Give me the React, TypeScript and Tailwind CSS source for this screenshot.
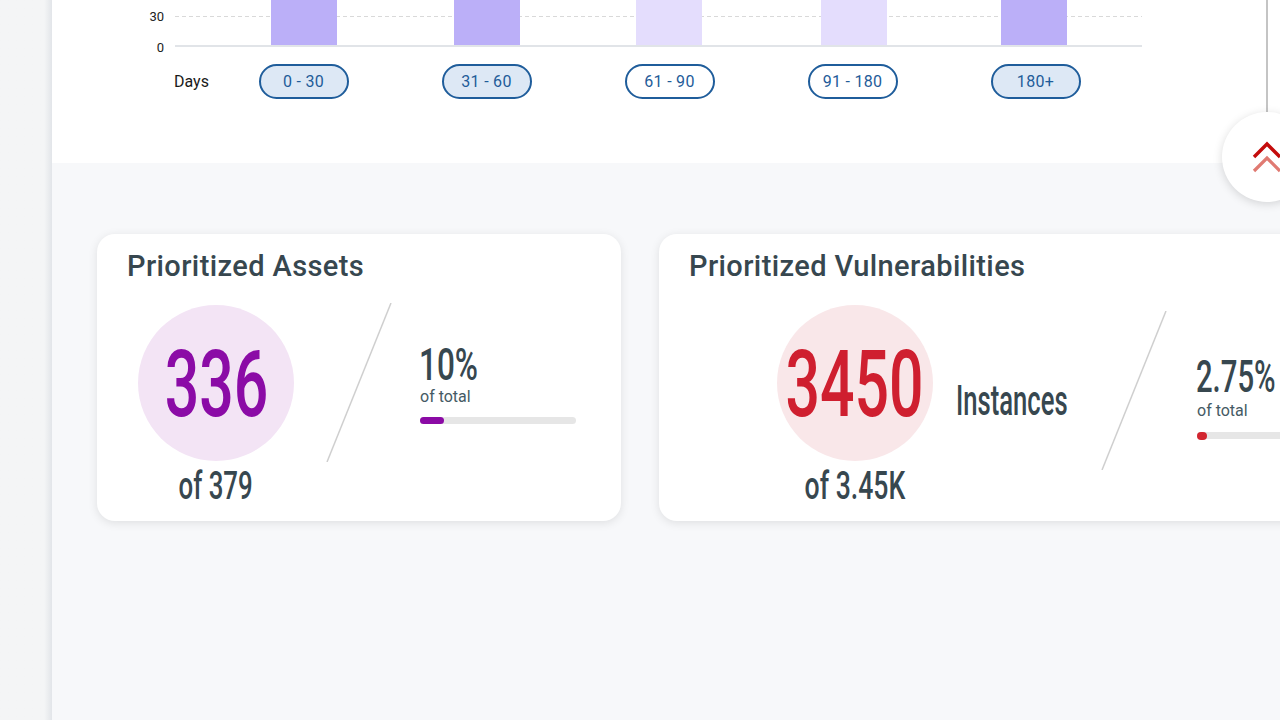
import React from "react";

const pills = [
  { label: "0 - 30", filled: true },
  { label: "31 - 60", filled: true },
  { label: "61 - 90", filled: false },
  { label: "91 - 180", filled: false },
  { label: "180+", filled: true },
];

const bars = [
  { x: 96, c: "#bbaff8" },
  { x: 279, c: "#bbaff8" },
  { x: 461, c: "#e4ddfd" },
  { x: 646, c: "#e4ddfd" },
  { x: 826, c: "#bbaff8" },
];

function Diagonal({ h }: { h: number }) {
  return (
    <svg width="66" height={h} className="shrink-0">
      <line x1="65" y1="0" x2="1" y2={h} stroke="#cfcfcf" strokeWidth="1.5" />
    </svg>
  );
}

export default function App() {
  return (
    <div
      className="relative flex w-[1280px] h-[720px] overflow-hidden bg-[#f7f8fa]"
      style={{ fontFamily: "Roboto, 'Noto Sans', sans-serif" }}
    >
      {/* left rail */}
      <div className="w-[52px] shrink-0 h-full bg-linear-to-r from-[#f4f5f6] from-85% to-[#e2e5e9]" />

      {/* main */}
      <div className="flex-1 flex flex-col min-w-0">
        {/* chart panel */}
        <div className="relative h-[163px] bg-white shrink-0">
          <div className="flex">
            <div className="w-[123px] shrink-0 relative h-[56px]">
              <div className="h-[32px] flex items-center justify-end pr-[11px] pt-[1px] text-[13px] text-[#222]">
                30
              </div>
              <div className="flex justify-end pr-[11px] text-[13px] text-[#222] leading-[16px] mt-[8px]">0</div>
            </div>
            <svg width="967" height="48" className="shrink-0">
              <line x1="0" y1="16.5" x2="967" y2="16.5" stroke="#d9d9d9" strokeWidth="1" strokeDasharray="4 3" />
              {bars.map((b, i) => (
                <rect key={i} x={b.x} y="0" width="66" height="45" fill={b.c} />
              ))}
              <line x1="0" y1="46" x2="967" y2="46" stroke="#e1e4e8" strokeWidth="2" />
            </svg>
          </div>
          <div className="flex items-center mt-[8px] pl-[122px]">
            <div className="w-[38px] text-[16px] text-[#1a1a1a] leading-[20px]">Days</div>
            <div className="grid grid-cols-5 w-[915px]">
              {pills.map((p) => (
                <div key={p.label} className="flex justify-center">
                  <div
                    className={
                      p.filled
                        ? "w-[90px] h-[35px] rounded-full border-2 border-[#1f5d9b] bg-[#dde8f5] flex items-center justify-center text-[16px] tracking-[0.3px] text-[#1f5c99]"
                        : "w-[90px] h-[35px] rounded-full border-2 border-[#1f5d9b] bg-white flex items-center justify-center text-[16px] tracking-[0.3px] text-[#1f5c99]"
                    }
                  >
                    {p.label}
                  </div>
                </div>
              ))}
            </div>
          </div>
          <div className="absolute left-[1214px] top-0 w-[2px] h-[112px] bg-[#c4c4c4]" />
        </div>

        {/* cards */}
        <div className="flex gap-[38px] pl-[45px] pt-[71px]">
          {/* card 1 */}
          <div className="w-[524px] h-[287px] shrink-0 bg-white rounded-[18px] shadow-[0_2px_10px_rgba(0,0,0,0.10)]">
            <div className="pt-[15px] pl-[30px] text-[29px] leading-[34px] font-medium tracking-[0.4px] text-[#37474f] whitespace-nowrap">
              Prioritized Assets
            </div>
            <div className="flex items-start pl-[41px] mt-[22px]">
              <div className="flex flex-col items-center w-[156px] shrink-0">
                <div className="w-[156px] h-[156px] rounded-full bg-[#f3e4f5] flex items-center justify-center pt-[3px]">
                  <span className="shrink-0 whitespace-nowrap text-[92px] leading-none font-medium text-[#8b0ba6] scale-x-[0.66]">
                    336
                  </span>
                </div>
                <div className="mt-[6px] flex justify-center w-[156px]">
                  <span className="shrink-0 whitespace-nowrap text-[38px] leading-none font-medium text-[#37474f] scale-x-[0.68]">
                    of 379
                  </span>
                </div>
              </div>
              <div className="ml-[32px] mt-[-2px]">
                <Diagonal h={159} />
              </div>
              <div className="ml-[27px] mt-[37px] flex flex-col w-[156px]">
                <div className="w-[61px]">
                  <span className="block whitespace-nowrap origin-left text-[45px] leading-none font-medium text-[#37474f] scale-x-[0.7]">
                    10%
                  </span>
                </div>
                <div className="text-[16px] leading-[16px] text-[#455a64] mt-[2px] ml-[1px]">of total</div>
                <div className="mt-[12px] h-[7px] w-[156px] rounded-full bg-[#e6e6e6] ml-[1px]">
                  <div className="h-[7px] w-[24px] rounded-full bg-[#8b0aa5]" />
                </div>
              </div>
            </div>
          </div>

          {/* card 2 */}
          <div className="w-[660px] h-[287px] shrink-0 bg-white rounded-[18px] shadow-[0_2px_10px_rgba(0,0,0,0.10)]">
            <div className="pt-[15px] pl-[30px] text-[29px] leading-[34px] font-medium tracking-[0.4px] text-[#37474f] whitespace-nowrap">
              Prioritized Vulnerabilities
            </div>
            <div className="flex items-start pl-[118px] mt-[22px]">
              <div className="flex flex-col items-center w-[156px] shrink-0">
                <div className="w-[156px] h-[156px] rounded-full bg-[#f9e7e9] flex items-center justify-center pt-[3px]">
                  <span className="shrink-0 whitespace-nowrap text-[92px] leading-none font-medium text-[#cf1f2f] scale-x-[0.66]">
                    3450
                  </span>
                </div>
                <div className="mt-[6px] flex justify-center w-[156px]">
                  <span className="shrink-0 whitespace-nowrap text-[38px] leading-none font-medium text-[#37474f] scale-x-[0.7]">
                    of 3.45K
                  </span>
                </div>
              </div>
              <div className="ml-[23px] mt-[75px] w-[115px] shrink-0">
                <span className="block whitespace-nowrap origin-left text-[42px] leading-none font-medium text-[#37474f] scale-x-[0.61]">
                  Instances
                </span>
              </div>
              <div className="ml-[30px] mt-[6px]">
                <Diagonal h={159} />
              </div>
              <div className="ml-[29px] mt-[49px] flex flex-col w-[156px] shrink-0">
                <div className="w-[82px]">
                  <span className="block whitespace-nowrap origin-left text-[45px] leading-none font-medium text-[#37474f] scale-x-[0.65]">
                    2.75%
                  </span>
                </div>
                <div className="text-[16px] leading-[20px] text-[#455a64] mt-[2px] ml-[1px]">of total</div>
                <div className="mt-[11px] h-[7px] w-[156px] rounded-full bg-[#e6e6e6] ml-[1px]">
                  <div className="h-[8px] -mt-[0.5px] w-[10px] rounded-full bg-[#d22630]" />
                </div>
              </div>
            </div>
          </div>
        </div>
      </div>

      {/* scroll to top button */}
      <div className="absolute left-[1222px] top-[112px] w-[90px] h-[90px] rounded-full bg-white shadow-[0_2px_10px_rgba(0,0,0,0.15)] flex items-center justify-center">
        <svg width="32" height="34" viewBox="0 0 32 34">
          <polyline points="3,17 16,4 29,17" fill="none" stroke="#c40c0c" strokeWidth="3.4" />
          <polyline points="3,31 16,18 29,31" fill="none" stroke="#e07a72" strokeWidth="3.2" />
        </svg>
      </div>
    </div>
  );
}
